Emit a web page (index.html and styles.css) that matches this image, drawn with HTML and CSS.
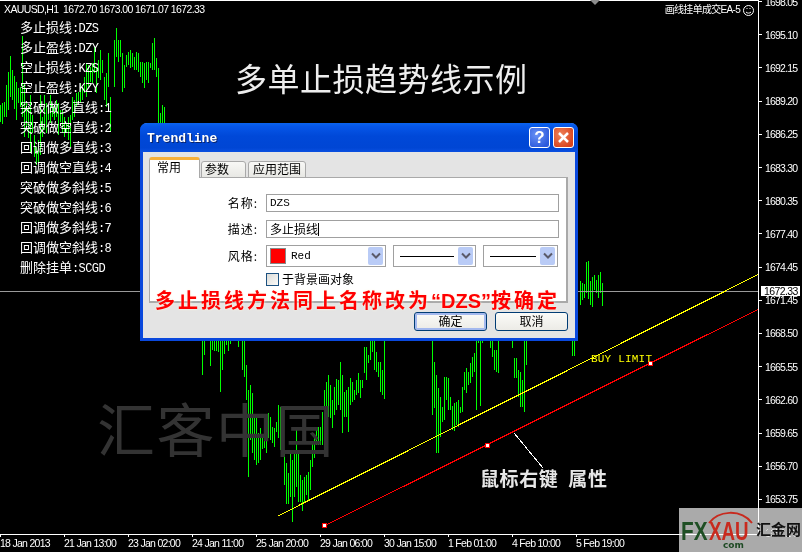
FILE: index.html
```html
<!DOCTYPE html>
<html lang="zh">
<head>
<meta charset="utf-8">
<title>Trendline</title>
<link rel="stylesheet" href="styles.css">
</head>
<body>
<div class="terminal">
  <div class="chart">
    <svg class="plot" width="758" height="534" viewBox="0 0 758 534">
      <path class="bars" d="M0.5 105V122M2.5 103V124M4.5 102V117M6.5 85V117M8.5 72V110M10.5 56V97M12.5 70V100M14.5 76V109M16.5 82V120M18.5 88V103M20.5 87V107M22.5 36V117M24.5 83V137M26.5 103V127M28.5 107V138M30.5 95V153M32.5 115V133M34.5 135V157M36.5 147V165M38.5 140V162M40.5 95V155M42.5 117V137M44.5 95V130M46.5 103V133M48.5 105V120M50.5 95V123M52.5 103V117M54.5 107V120M56.5 100V117M58.5 103V135M60.5 110V122M62.5 110V133M64.5 117V137M66.5 123V133M68.5 117V140M70.5 115V147M72.5 97V120M74.5 100V117M76.5 93V107M78.5 92V105M80.5 83V103M82.5 87V100M84.5 77V93M86.5 63V97M88.5 65V87M90.5 67V82M92.5 63V83M94.5 47V73M96.5 68V93M98.5 60V78M100.5 50V80M102.5 60V73M104.5 77V100M106.5 73V107M108.5 53V87M110.5 97V132M114.5 40V87M116.5 28V57M118.5 40V62M120.5 40V57M122.5 53V92M124.5 65V88M126.5 55V67M128.5 52V65M130.5 50V68M132.5 53V67M134.5 57V70M136.5 52V70M138.5 53V72M140.5 62V77M142.5 62V83M144.5 63V88M146.5 62V80M148.5 62V83M150.5 63V68M152.5 43V70M154.5 38V70M156.5 58V77M158.5 68V125M160.5 113V123M162.5 105V123M164.5 107V123"/>
      <path class="bars" d="M202.5 341V375M204.5 341V355M210.5 341V366M212.5 341V350M214.5 341V351M216.5 341V351M218.5 341V352M220.5 341V392M222.5 341V370M224.5 341V354M226.5 341V345M228.5 341V351M230.5 341V344M238.5 341V347M242.5 341V370M244.5 341V377M246.5 365V400M248.5 390V477M250.5 385V440M252.5 393V453M254.5 415V460M256.5 415V465M258.5 433V463M260.5 428V460M262.5 437V449M264.5 433V448M266.5 437V453M268.5 413V438M270.5 417V440M272.5 427V443M274.5 428V447M276.5 422V432M278.5 405V438M280.5 407V450M282.5 427V457M284.5 453V485M286.5 463V504M288.5 473V504M290.5 453V497M292.5 460V522M294.5 452V497M296.5 428V487M298.5 450V502M300.5 475V502M302.5 480V511M304.5 477V503M306.5 475V495M308.5 472V500M310.5 460V490M312.5 443V467M314.5 437V458M316.5 430V445M318.5 427V445M320.5 427V445M322.5 412V445M324.5 390V422M326.5 382V427M328.5 375V417M330.5 385V418M332.5 400V428M334.5 387V415M336.5 379V410M338.5 380V405M340.5 362V410M342.5 375V433M344.5 392V417M346.5 390V417M348.5 387V432M350.5 378V405M352.5 382V402M354.5 390V400M356.5 380V395M358.5 373V393M360.5 380V398M362.5 380V388M364.5 347V373M366.5 347V380M368.5 355V363M370.5 341V360M372.5 341V352M374.5 341V370M376.5 352V372M378.5 362V377M380.5 362V392M382.5 370V395M384.5 341V399"/>
      <path class="bars" d="M432.5 341V415M434.5 362V408M436.5 375V453M438.5 388V453M440.5 397V437M442.5 407V422M444.5 377V420M446.5 377V400M448.5 378V410M450.5 397V410M452.5 406V430M454.5 403V431M456.5 402V425M458.5 400V427M460.5 407V413M462.5 387V412M464.5 372V390M466.5 368V393M468.5 372V385M470.5 363V383M472.5 357V377M474.5 353V372M476.5 341V410M478.5 341V343M480.5 341V406M482.5 341V343M490.5 341V348M492.5 341V357M494.5 350V370M496.5 350V372M498.5 341V373M512.5 341V348M514.5 358V378M516.5 358V378M518.5 370V397M520.5 372V407M522.5 380V407M524.5 341V412M526.5 341V365M572.5 341V356M574.5 341V356M580.5 281V305M582.5 283V300M584.5 284V298M586.5 262V293M588.5 261V299M590.5 281V305M592.5 277V307M594.5 275V290M596.5 280V293M598.5 275V298M600.5 272V293M602.5 283V306"/>
      <path class="price-line" d="M0 291.5H758"/>
      <path class="trend" id="yellow-trend" d="M278 516L758 274.5"/>
      <path class="trend red" d="M324 526L758 309.5"/>
      <path class="pointer" d="M514 433L543 468"/>
      <rect class="anchor" x="322.5" y="523.5" width="4" height="4"/>
      <rect class="anchor" x="485.5" y="443.5" width="4" height="4"/>
      <rect class="anchor" x="648.5" y="361.5" width="4" height="4"/>
      <path class="marker" d="M590 0H600L595 5Z"/>
    </svg>

    <div class="watermark">汇客中国</div>
    <div class="symbol-info">XAUUSD,H1&nbsp; 1672.70 1673.00 1671.07 1672.33</div>
    <div class="ea-name"><span>画线挂单成交EA-5</span>
      <svg class="smile" width="11" height="11" viewBox="0 0 11 11"><circle cx="5.5" cy="5.5" r="5"/><path d="M3 7c1.500 1.500 3.500 1.500 5 0M3.500 3.500h1M6.500 3.500h1"/></svg>
    </div>
    <ul class="commands">
      <li>多止损线<span class="latin">:DZS</span></li>
      <li>多止盈线<span class="latin">:DZY</span></li>
      <li>空止损线<span class="latin">:KZS</span></li>
      <li>空止盈线<span class="latin">:KZY</span></li>
      <li>突破做多直线<span class="latin">:1</span></li>
      <li>突破做空直线<span class="latin">:2</span></li>
      <li>回调做多直线<span class="latin">:3</span></li>
      <li>回调做空直线<span class="latin">:4</span></li>
      <li>突破做多斜线<span class="latin">:5</span></li>
      <li>突破做空斜线<span class="latin">:6</span></li>
      <li>回调做多斜线<span class="latin">:7</span></li>
      <li>回调做空斜线<span class="latin">:8</span></li>
      <li>删除挂单<span class="latin">:SCGD</span></li>
    </ul>
    <div class="headline">多单止损趋势线示例</div>
    <div class="order-label">BUY LIMIT</div>
    <div class="note">鼠标右键 属性</div>

    <section class="dialog">
      <header class="titlebar">
        <span class="title">Trendline</span>
        <span class="win-btn help">?</span>
        <span class="win-btn close"><svg width="13" height="13" viewBox="0 0 13 13"><path d="M2 2L11 11M11 2L2 11"/></svg></span>
      </header>
      <div class="dialog-body">
        <nav class="tabs">
          <span class="tab active">常用</span>
          <span class="tab">参数</span>
          <span class="tab">应用范围</span>
        </nav>
        <div class="panel">
          <div class="row"><label class="field-label">名称:</label><div class="input latin-input">DZS</div></div>
          <div class="row"><label class="field-label">描述:</label><div class="input">多止损线<i class="caret"></i></div></div>
          <div class="row style-row">
            <label class="field-label">风格:</label>
            <div class="select color"><i class="swatch"></i><span class="latin-input">Red</span><span class="arrow"><svg width="10" height="8" viewBox="0 0 10 8"><path d="M1 1.500L5 5.500L9 1.500"/></svg></span></div>
            <div class="select line"><i class="stroke"></i><span class="arrow"><svg width="10" height="8" viewBox="0 0 10 8"><path d="M1 1.500L5 5.500L9 1.500"/></svg></span></div>
            <div class="select line narrow"><i class="stroke"></i><span class="arrow"><svg width="10" height="8" viewBox="0 0 10 8"><path d="M1 1.500L5 5.500L9 1.500"/></svg></span></div>
          </div>
          <div class="check-row"><i class="checkbox"></i><span>于背景画对象</span></div>
        </div>
        <div class="buttons">
          <span class="btn default">确定</span>
          <span class="btn">取消</span>
        </div>
        <div class="callout">多止损线方法同上名称改为<b>“DZS”</b>按确定</div>
      </div>
    </section>
  </div>

  <div class="price-axis">
    <span>1698.05</span><span>1695.10</span><span>1692.15</span><span>1689.20</span><span>1686.25</span><span>1683.30</span><span>1680.35</span><span>1677.40</span><span>1674.45</span><span>1671.45</span><span>1668.50</span><span>1665.55</span><span>1662.60</span><span>1659.65</span><span>1656.70</span><span>1653.75</span><span>1650.80</span>
  </div>
  <div class="price-tag">1672.33</div>

  <div class="time-axis">
    <span>18 Jan 2013</span><span>21 Jan 13:00</span><span>23 Jan 02:00</span><span>24 Jan 11:00</span><span>25 Jan 20:00</span><span>29 Jan 06:00</span><span>30 Jan 15:00</span><span>1 Feb 01:00</span><span>4 Feb 10:00</span><span>5 Feb 19:00</span>
  </div>

  <div class="logo">
    <span class="logo-fx">FX</span>
    <span class="logo-xau">XAU</span>
    <svg class="logo-arc" width="50" height="18" viewBox="0 0 50 18"><path d="M3 14C12 2 34-1 46 14"/></svg>
    <span class="logo-com">com</span>
    <span class="logo-cn">汇金网</span>
  </div>
</div>
</body>
</html>
```

FILE: styles.css
```css
* { box-sizing: border-box; }

html, body {
  margin: 0;
  padding: 0;
  background: #000;
}

.terminal {
  position: relative;
  display: grid;
  grid-template-columns: 759px 43px;
  grid-template-rows: 535px 18px;
  width: 802px;
  height: 553px;
  overflow: hidden;
  background: #000;
  color: #fff;
  font-family: "Liberation Sans", "Noto Sans CJK SC", sans-serif;
}

/* chart canvas */
.chart {
  position: relative;
  overflow: hidden;
  border-right: 1px solid #fff;
  border-bottom: 1px solid #fff;
  box-shadow: inset 0 1px 0 #fff;
}

.plot {
  position: absolute;
  left: 0;
  top: 0;
  fill: none;
}

.bars { stroke: #00ff00; stroke-width: 1; shape-rendering: crispEdges; }
.price-line { stroke: #9a9a9a; stroke-width: 1; shape-rendering: crispEdges; }
.trend { stroke: #ffff00; stroke-width: 1.2; shape-rendering: crispEdges; }
.trend.red { stroke: #ff0000; }
.pointer { stroke: #fff; stroke-width: 1; shape-rendering: crispEdges; }
.anchor { fill: #fff; stroke: #ff0000; stroke-width: 1; shape-rendering: crispEdges; }
.marker { fill: #8c8c8c; }

.watermark {
  position: absolute;
  left: 97px;
  top: 389px;
  font: 400 58px/76px "Noto Sans CJK SC", sans-serif;
  color: #333;
  white-space: nowrap;
  letter-spacing: 1.5px;
}

.symbol-info {
  position: absolute;
  left: 4px;
  top: 3px;
  font-size: 10.5px;
  line-height: 12px;
  letter-spacing: -0.62px;
  white-space: nowrap;
}

.ea-name {
  position: absolute;
  right: 4px;
  top: 4px;
  display: flex;
  align-items: center;
  gap: 3px;
  font: 10px/12px "Liberation Sans", "Noto Sans CJK SC", sans-serif;
  letter-spacing: -0.7px;
  white-space: nowrap;
}

.smile { fill: none; stroke: #fff; stroke-width: 1; }

.commands {
  position: absolute;
  left: 20px;
  top: 17px;
  margin: 0;
  padding: 0;
  list-style: none;
  font: 13px/20px "Noto Sans CJK SC", sans-serif;
  color: #fff;
}

.commands li { height: 20px; white-space: nowrap; }

.latin {
  font: 12px/20px "Liberation Mono", monospace;
  letter-spacing: -0.6px;
}

.headline {
  position: absolute;
  left: 235px;
  top: 54px;
  font: 400 32px/46px "Noto Sans CJK SC", sans-serif;
  letter-spacing: 0.5px;
  color: #eee;
  white-space: nowrap;
}

.order-label {
  position: absolute;
  left: 591px;
  top: 353px;
  font: 11px/12px "Liberation Mono", monospace;
  letter-spacing: 0.2px;
  color: #ffff00;
  white-space: nowrap;
}

.note {
  position: absolute;
  left: 480px;
  top: 465px;
  font: 700 19px/26px "Noto Sans CJK SC", sans-serif;
  letter-spacing: 0.6px;
  word-spacing: 5px;
  color: #e6e6e6;
  white-space: nowrap;
}

/* dialog window */
.dialog {
  position: absolute;
  left: 140px;
  top: 123px;
  width: 438px;
  height: 218px;
  display: flex;
  flex-direction: column;
  border: 3px solid #0a48dc;
  border-top: 0;
  border-radius: 7px 7px 0 0;
  background: #e4e4e4;
  color: #000;
  font: 12px/16px "Noto Sans CJK SC", sans-serif;
}

.titlebar {
  display: flex;
  align-items: center;
  gap: 3px;
  height: 29px;
  margin: 0 -3px;
  padding: 0 4px 1px 7px;
  border-radius: 7px 7px 0 0;
  background: linear-gradient(#0a64ee 0, #0656e8 12%, #0048d8 45%, #0046d4 85%, #0a4fe0 100%);
}

.title {
  flex: 1;
  padding-top: 4px;
  font: 700 13px/16px "Liberation Mono", monospace;
  color: #fff;
  text-shadow: 1px 1px 0 #0a246a;
}

.win-btn {
  display: flex;
  align-items: center;
  justify-content: center;
  width: 21px;
  height: 21px;
  border: 1px solid #fff;
  border-radius: 3px;
  color: #fff;
}

.help {
  background: radial-gradient(circle at 35% 35%, #6a92f5, #2a58dc 80%);
  font: 700 17px/19px "Liberation Sans", sans-serif;
}

.close {
  background: radial-gradient(circle at 35% 35%, #f0835a, #d8421c 80%);
}

.close svg { fill: none; stroke: #fff; stroke-width: 2.500; }

.dialog-body {
  position: relative;
  flex: 1;
  display: flex;
  flex-direction: column;
  padding: 6px 7px 0 6px;
}

.tabs {
  display: flex;
  align-items: flex-end;
  gap: 1px;
  height: 20px;
  margin-bottom: -1px;
  position: relative;
  z-index: 1;
}

.tab {
  display: block;
  height: 17px;
  padding: 0 5px 0 4px;
  border: 1px solid #a9a9a9;
  border-radius: 3px 3px 0 0;
  background: linear-gradient(#f8f8f6, #e8e8e4);
  line-height: 14px;
  white-space: nowrap;
}

.tab:nth-child(2) { width: 45px; padding-left: 3px; }
.tab:nth-child(3) { width: 58px; margin-left: 1px; }

.tab.active {
  width: 51px;
  height: 21px;
  padding: 0 0 0 7px;
  border: 1px solid #a9a9a9;
  border-top: 3px solid #f7b03a;
  border-bottom: 0;
  background: #fff;
  line-height: 14px;
}

.panel {
  display: flex;
  flex-direction: column;
  height: 126px;
  padding-top: 16px;
  border: 1px solid #a9a9a9;
  border-right: 2px solid #a9a9a9;
  border-bottom: 2px solid #a9a9a9;
  background: #fff;
}

.row {
  display: flex;
  align-items: center;
  height: 18px;
  margin-bottom: 8px;
}

.field-label {
  width: 116px;
  padding-right: 8px;
  text-align: right;
  letter-spacing: 1px;
  white-space: nowrap;
}

.input {
  width: 293px;
  height: 18px;
  padding: 0 3px;
  border: 1px solid #a0a0a0;
  background: #fff;
  line-height: 15px;
  white-space: nowrap;
}

.latin-input { font: 11px/16px "Liberation Mono", monospace; }

.caret {
  display: inline-block;
  width: 1px;
  height: 13px;
  vertical-align: -2px;
  background: #000;
}

.style-row {
  height: 22px;
  margin-top: -1px;
  margin-bottom: 5px;
  gap: 7px;
}

.style-row .field-label { margin-right: -7px; }

.select {
  display: flex;
  align-items: center;
  height: 22px;
  padding: 0 2px 0 3px;
  border: 1px solid #a0a0a0;
  background: #fff;
}

.select.color { width: 120px; gap: 5px; }
.select.line { width: 83px; padding-left: 6px; }
.select.narrow { width: 75px; }

.swatch {
  width: 16px;
  height: 16px;
  border: 1px solid #888;
  background: #ff0000;
}

.stroke {
  flex: 1;
  height: 1px;
  margin-right: 4px;
  background: #000;
}

.select .arrow {
  display: flex;
  align-items: center;
  justify-content: center;
  width: 15px;
  height: 18px;
  margin-left: auto;
  border-radius: 2px;
  background: #b9cbf6;
}

.arrow svg { fill: none; stroke: #5a5a6a; stroke-width: 2; }

.check-row {
  display: flex;
  align-items: center;
  gap: 3px;
  height: 14px;
  margin-left: 116px;
}

.checkbox {
  width: 13px;
  height: 13px;
  border: 1px solid #1c5180;
  background: linear-gradient(135deg, #dcdcd8, #fbfbf9);
}

.buttons {
  display: flex;
  justify-content: flex-end;
  gap: 8px;
  margin-top: 9px;
}

.btn {
  display: block;
  width: 73px;
  height: 19px;
  border: 1px solid #003c74;
  border-radius: 3px;
  background: linear-gradient(#fbfbf8, #ecebe6);
  text-align: center;
  line-height: 16px;
}

.btn.default { box-shadow: inset 0 0 0 2px #a4b9ee; }

.callout {
  position: absolute;
  left: 12px;
  top: 135px;
  font: 700 20px/26px "Noto Sans CJK SC", sans-serif;
  letter-spacing: 3px;
  color: #ff0000;
  white-space: nowrap;
  text-shadow: 0 0 3px #fff6e0;
}

.callout b {
  font: 700 20px/26px "Liberation Sans", sans-serif;
  letter-spacing: 0;
}

/* axes */
.price-axis {
  display: flex;
  flex-direction: column;
  grid-row: 1;
  grid-column: 2;
  margin-top: -15px;
  font-size: 10.5px;
  letter-spacing: -0.8px;
}

.price-axis span {
  display: flex;
  align-items: center;
  flex: 0 0 33.2px;
  gap: 3px;
  white-space: nowrap;
}

.price-axis span::before {
  content: "";
  width: 3px;
  height: 1px;
  background: #fff;
}

.price-tag {
  position: absolute;
  left: 761px;
  top: 286px;
  width: 39px;
  height: 10px;
  padding-left: 3px;
  background: #fff;
  color: #000;
  font-size: 10.5px;
  line-height: 10px;
  letter-spacing: -0.6px;
}

.time-axis {
  display: flex;
  grid-column: 1 / 3;
  grid-row: 2;
  border-bottom: 1px solid #fff;
  font-size: 10.5px;
  line-height: 12px;
  letter-spacing: -0.72px;
}

.time-axis span {
  flex: 0 0 64px;
  padding-top: 2px;
  white-space: nowrap;
  background: linear-gradient(#fff, #fff) left top / 1px 2px no-repeat;
}

/* logo */
.logo {
  position: absolute;
  left: 679px;
  top: 508px;
  width: 123px;
  height: 44px;
  font-family: "Liberation Sans", sans-serif;
}

.logo::before {
  content: "";
  position: absolute;
  inset: 0;
  background: #aaa;
  mix-blend-mode: lighten;
}

.logo-fx, .logo-xau {
  position: absolute;
  top: 10px;
  font: 700 26px/26px "Liberation Sans", sans-serif;
  transform-origin: left center;
}

.logo-fx {
  left: 2px;
  color: #1f4f24;
  transform: scaleX(0.8);
}

.logo-xau {
  left: 30px;
  color: #c82a1e;
  transform: scaleX(0.72);
}

.logo-arc {
  position: absolute;
  left: 27px;
  top: 1px;
  fill: none;
  stroke: #c82a1e;
  stroke-width: 2;
}

.logo-com {
  position: absolute;
  left: 44px;
  top: 32px;
  font: 700 9px/10px "DejaVu Sans", sans-serif;
  color: #1e4a24;
}

.logo-cn {
  position: absolute;
  left: 77px;
  top: 11px;
  font: 700 15px/20px "Noto Sans CJK SC", sans-serif;
  color: #111;
}
```
